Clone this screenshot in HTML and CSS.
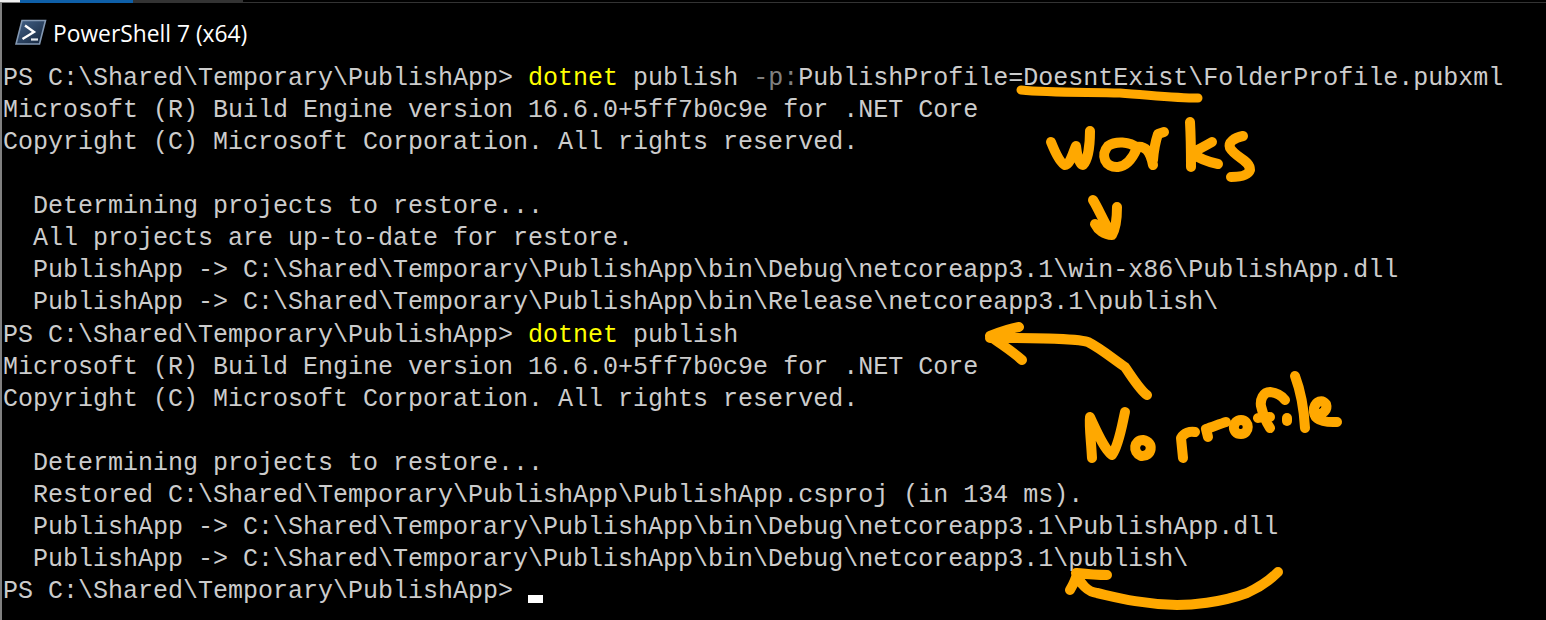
FILE: index.html
```html
<!DOCTYPE html>
<html lang="en">
<head>
<meta charset="utf-8">
<title>PowerShell 7 (x64)</title>
<link rel="stylesheet" href="styles.css">
</head>
<body>
<div class="window">
  <div class="topbar">
    <span class="seg seg-blank"></span>
    <span class="seg seg-blue"></span>
    <span class="seg seg-dark"></span>
    <span class="seg seg-rest"></span>
  </div>
  <div class="main">
    <header class="titlebar">
      <svg class="ps-icon" width="32" height="27" viewBox="0 0 32 27" aria-hidden="true">
        <defs>
          <linearGradient id="psg" x1="0" y1="0" x2="1" y2="1">
            <stop offset="0" stop-color="#44638a"/>
            <stop offset="1" stop-color="#14243a"/>
          </linearGradient>
        </defs>
        <path d="M7 1.500H30.500L24.500 25H1Z" fill="url(#psg)" stroke="#8398b2" stroke-width="1.600"/>
        <path d="M10 6.500L19 13L7.500 20" fill="none" stroke="#fff" stroke-width="2.400"/>
        <path d="M16 20.500H23" stroke="#e4e9ef" stroke-width="2.200"/>
      </svg>
      <span class="title">PowerShell 7 (x64)</span>
    </header>
    <pre class="console"><span>PS C:\Shared\Temporary\PublishApp&gt; <b>dotnet</b> publish <i>-p:</i>PublishProfile=DoesntExist\FolderProfile.pubxml</span>
<span>Microsoft (R) Build Engine version 16.6.0+5ff7b0c9e for .NET Core</span>
<span>Copyright (C) Microsoft Corporation. All rights reserved.</span>

<span>  Determining projects to restore...</span>
<span>  All projects are up-to-date for restore.</span>
<span>  PublishApp -&gt; C:\Shared\Temporary\PublishApp\bin\Debug\netcoreapp3.1\win-x86\PublishApp.dll</span>
<span>  PublishApp -&gt; C:\Shared\Temporary\PublishApp\bin\Release\netcoreapp3.1\publish\</span>
<span>PS C:\Shared\Temporary\PublishApp&gt; <b>dotnet</b> publish</span>
<span>Microsoft (R) Build Engine version 16.6.0+5ff7b0c9e for .NET Core</span>
<span>Copyright (C) Microsoft Corporation. All rights reserved.</span>

<span>  Determining projects to restore...</span>
<span>  Restored C:\Shared\Temporary\PublishApp\PublishApp.csproj (in 134 ms).</span>
<span>  PublishApp -&gt; C:\Shared\Temporary\PublishApp\bin\Debug\netcoreapp3.1\PublishApp.dll</span>
<span>  PublishApp -&gt; C:\Shared\Temporary\PublishApp\bin\Debug\netcoreapp3.1\publish\</span>
<span>PS C:\Shared\Temporary\PublishApp&gt; <em class="cursor"></em></span></pre>
  </div>
  <svg class="ink" width="1546" height="620" viewBox="0 0 1546 620" aria-hidden="true">
    <g fill="none" stroke="#ffa800" stroke-width="10" stroke-linecap="round" stroke-linejoin="round">
      <path stroke-width="9" d="M1021 90C1050 93 1090 92 1120 93C1150 95 1175 98 1198 98"/>
      <path d="M1051 142C1055 152 1060 163 1065 165C1070 165 1073 152 1076 146C1077 155 1079 165 1083 165C1088 160 1090 145 1090 131"/>
      <path d="M1108 146C1100 155 1105 168 1118 167C1128 166 1134 155 1137 148C1130 141 1115 141 1108 146Z"/>
      <path d="M1137 147C1145 146 1150 150 1153 165M1153 160C1154 148 1156 140 1158 134L1164 132"/>
      <path d="M1190 122C1191 140 1191 155 1191 167M1212 142C1205 146 1198 150 1191 153C1200 159 1208 162 1218 164"/>
      <path d="M1243 136C1234 138 1228 142 1230 148C1236 158 1250 160 1250 170C1248 176 1238 177 1231 177"/>
      <path d="M1093 200C1098 208 1103 220 1110 232M1117 207C1117 218 1116 228 1112 235C1104 235 1098 230 1095 224"/>
      <path d="M1147 395C1140 390 1134 380 1125 367C1112 358 1100 348 1088 342C1075 338 1030 338 990 338M1019 327C1008 329 1000 332 990 336C1002 345 1012 351 1022 360"/>
      <path d="M1092 458C1091 440 1089 425 1090 417C1097 432 1104 449 1112 455C1119 445 1122 425 1125 412"/>
      <path d="M1143 440C1134 440 1132 452 1141 456C1152 457 1155 442 1143 440Z"/>
      <path d="M1183 458L1181 438C1184 433 1190 431 1195 432"/>
      <path d="M1208 437L1206 429C1212 427 1220 424 1226 422"/>
      <path d="M1241 420C1232 420 1231 434 1241 434C1250 434 1250 420 1241 420Z"/>
      <path d="M1285 400C1282 396 1278 393 1270 392C1263 392 1260 400 1261 406C1263 415 1266 422 1270 428M1258 418C1262 417 1266 417 1270 417"/>
      <path d="M1287 418L1287 421"/>
      <path d="M1295 376C1301 392 1304 410 1305 428"/>
      <path d="M1317 415C1323 414 1328 410 1326 404C1322 399 1316 401 1314 408C1313 416 1316 423 1337 422"/>
      <path d="M1278 572C1268 582 1258 588 1247 593C1220 603 1190 605 1177 605C1140 604 1115 597 1097 593C1088 592 1080 584 1076 573M1107 575C1098 575 1086 574 1077 573C1076 579 1073 585 1070 590"/>
    </g>
  </svg>
</div>
</body>
</html>
```
FILE: styles.css
```css
html, body {
  margin: 0;
  padding: 0;
  background: #000;
}
.window {
  position: relative;
  width: 1546px;
  height: 620px;
  overflow: hidden;
  background: #000;
  display: flex;
  flex-direction: column;
}
.topbar {
  display: flex;
  align-items: flex-start;
  height: 3px;
  flex: none;
}
.seg { display: block; height: 3px; box-sizing: border-box; }
.seg-blank { width: 20px; background: #f0f0f0; border-bottom: 1px solid #808080; }
.seg-blue { width: 113px; background: #0e5fa8; }
.seg-dark { width: 110px; background: #333; }
.seg-rest { flex: 1; border-bottom: 1px solid #333; }
.main {
  flex: 1;
  border-left: 2px solid #808080;
  display: flex;
  flex-direction: column;
}
.titlebar {
  height: 60px;
  display: flex;
  align-items: center;
  padding-left: 13px;
  gap: 6px;
  flex: none;
}
.ps-icon { flex: none; margin-top: -2px; }
.title {
  font-family: "Open Sans", "Noto Sans", sans-serif;
  font-size: 22.8px;
  color: #fff;
}
.console {
  margin: 0;
  padding-left: 1px;
  font-family: "Liberation Mono", monospace;
  font-size: 25px;
  line-height: 32.06px;
  color: #cccccc;
  white-space: pre;
}
.console b { font-weight: normal; color: #ffff00; }
.console i { font-style: normal; color: #808080; }
.cursor {
  display: inline-block;
  width: 15px;
  height: 8px;
  background: #fff;
  vertical-align: -5px;
}
.ink {
  position: absolute;
  left: 0;
  top: 0;
  pointer-events: none;
}
```
